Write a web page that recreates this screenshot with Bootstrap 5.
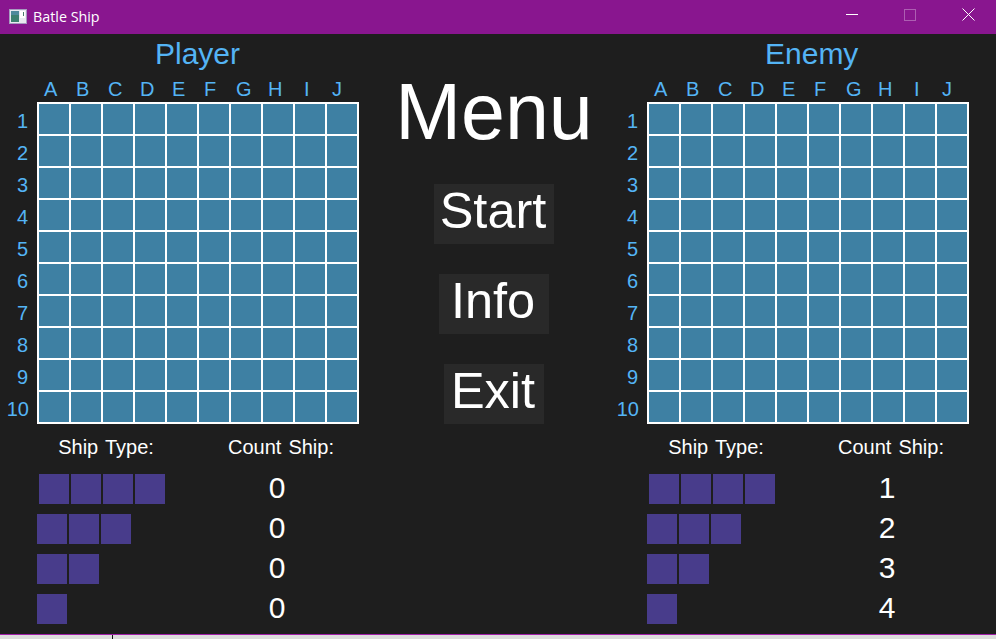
<!DOCTYPE html>
<html lang="en">
<head>
<meta charset="utf-8">
<title>Batle Ship</title>
<link href="https://cdn.jsdelivr.net/npm/bootstrap@5.3.0/dist/css/bootstrap.min.css" rel="stylesheet">
<style>
html,body{margin:0;height:639px;overflow:hidden;background:#dcdcdc;font-family:"Liberation Sans",Arial,sans-serif}
.win{width:996px;height:635px;background:#1e1e1e;border-bottom:1px solid #a01fa8}
.tbar{height:34px;background:#89168f;color:#fff;font:14.3px/34px "Open Sans","Noto Sans",sans-serif}
.tico{margin:-1px 6px 0 9px}
.tctl{width:58px;height:34px;padding:0 0 5px 2px}
.stage{height:600px}
.side{width:386px}
.ttl{height:36px;line-height:40px;font-size:30px;color:#54b4f5;padding-left:155px}
.cols{height:32px;padding-left:37px;color:#54b4f5;font-size:20px}
.cols span{width:32px;padding-left:7px;line-height:38px}
.cols span.wide{padding-left:11px}
.brd{height:322px}
.rows{width:37px;color:#54b4f5;font-size:20px;padding-top:3px}
.rows span{height:32px;line-height:32px;text-align:right;padding-right:9px}
.rows span.ten{padding-right:8px}
.wgrid{width:322px;height:322px;padding:2px;background:#fff;display:grid;grid-template-columns:repeat(10,30px);grid-auto-rows:30px;gap:2px}
.wgrid i{display:block;background:#3e80a3}
.stats{padding-left:37px}
.hdr{color:#fff;font-size:20px;word-spacing:1.5px;height:50px;line-height:46px}
.h1c{width:138px;text-align:center}
.h2c{width:172px;text-align:center;margin-left:20px}
.fl{height:40px}
.pieces{width:138px;height:30px;gap:2px}
.off{padding-left:2px}
.pieces i{display:block;width:30px;height:30px;background:#483c8b}
.num{width:172px;margin-left:16px;text-align:center;color:#fff;font-size:30px;line-height:28px}
.mid{width:224px;padding-right:8px}
.mtl{font-size:79px;color:#fff;height:150px;line-height:155px;text-align:center}
.mbtn{display:block;height:60px;background:#292929;color:#fff;font-size:50.5px;line-height:50px;text-align:center;padding:0 2px 6px 0;border:0;margin:0 auto 30px}
.w120{width:120px}.w110{width:110px}.w100{width:100px}
.strip{height:4px;padding-left:112px}
.strip i{display:block;width:1px;height:4px;background:#111}
</style>
</head>
<body>
<div class="win d-flex flex-column">
  <div class="tbar d-flex align-items-center">
    <svg class="tico" width="18" height="15" viewBox="0 0 18 15"><rect x=".5" y=".5" width="17" height="14" fill="#e9e9f0" stroke="#a79bc0"/><rect x="2" y="2" width="8" height="11" fill="#3d8070"/><rect x="2" y="2" width="8" height="4" fill="#4f8a9c"/><rect x="11" y="2" width="5" height="7" fill="#fff"/><rect x="14" y="3" width="1" height="4" fill="#4a7a6a"/></svg>
    <span class="flex-grow-1">Batle Ship</span>
    <div class="tctl d-flex align-items-center justify-content-center"><svg width="12" height="12" viewBox="0 0 12 12"><path d="M0 5.5H12" stroke="#fff"/></svg></div>
    <div class="tctl d-flex align-items-center justify-content-center"><svg width="12" height="12" viewBox="0 0 12 12"><rect x=".5" y=".5" width="11" height="11" fill="none" stroke="#ad5eb2"/></svg></div>
    <div class="tctl d-flex align-items-center justify-content-center"><svg width="13" height="13" viewBox="0 0 13 13"><path d="M.5 .5L12.5 12.5M12.5 .5L.5 12.5" stroke="#fff"/></svg></div>
  </div>
  <div class="stage d-flex" id="stage"></div>
</div>
<div class="strip"><i></i></div>
<script>
function panel(name,counts){
  var letters="ABCDEFGHIJ".split("").map(function(l){return '<span'+(l=="I"?' class="wide"':'')+'>'+l+'</span>'}).join("");
  var rows="",cells="";
  for(var i=1;i<=10;i++)rows+='<span'+(i==10?' class="ten"':'')+'>'+i+'</span>';
  for(var j=0;j<100;j++)cells+="<i></i>";
  var fleet=[4,3,2,1].map(function(n,k){
    var p="";for(var q=0;q<n;q++)p+="<i></i>";
    return '<div class="fl d-flex"><div class="pieces d-flex'+(k==0?' off':'')+'">'+p+'</div><div class="num">'+counts[k]+'</div></div>';
  }).join("");
  return '<div class="side flex-shrink-0"><div class="ttl">'+name+'</div><div class="cols d-flex">'+letters+'</div>'+
  '<div class="brd d-flex"><div class="rows d-flex flex-column">'+rows+'</div><div class="wgrid">'+cells+'</div></div>'+
  '<div class="stats"><div class="hdr d-flex"><div class="h1c">Ship Type:</div><div class="h2c">Count Ship:</div></div>'+fleet+'</div></div>';
}
var mid='<div class="mid flex-shrink-0"><div class="mtl">Menu</div>'+
'<button class="mbtn w120">Start</button><button class="mbtn w110">Info</button><button class="mbtn w100">Exit</button></div>';
document.getElementById("stage").innerHTML=panel("Player",[0,0,0,0])+mid+panel("Enemy",[1,2,3,4]);
</script>
<script src="https://cdn.jsdelivr.net/npm/bootstrap@5.3.0/dist/js/bootstrap.bundle.min.js"></script>
</body>
</html>
